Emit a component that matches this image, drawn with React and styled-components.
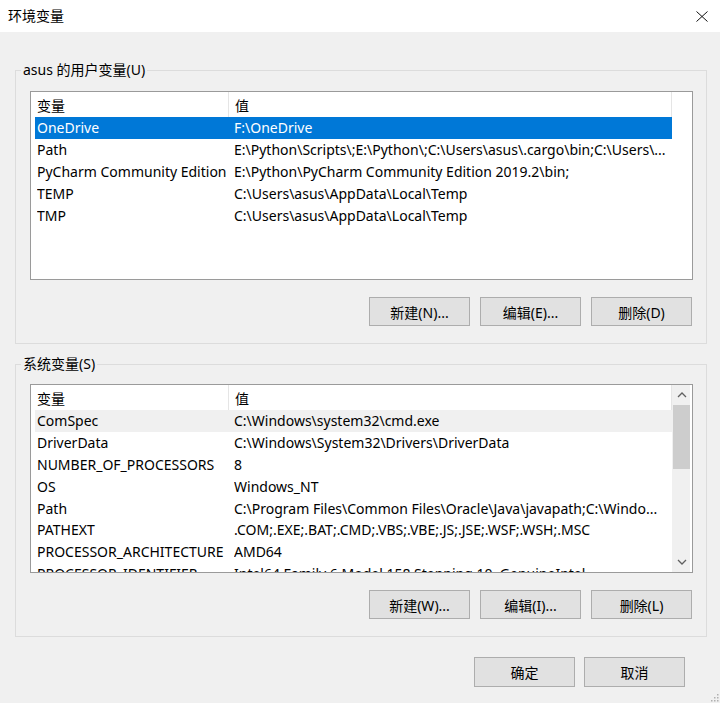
import React from "react";
import styled, { createGlobalStyle } from "styled-components";

const GlobalStyle = createGlobalStyle`
  html, body {
    margin: 0;
    padding: 0;
    background: #f0f0f0;
  }
  * {
    box-sizing: border-box;
  }
`;

const Window = styled.div`
  position: relative;
  width: 720px;
  height: 703px;
  background: #f0f0f0;
  font-family: "Microsoft YaHei UI", "Noto Sans", "Noto Sans CJK SC", sans-serif;
  font-size: 14px;
  color: #000;
  overflow: hidden;
`;

const TitleBar = styled.div`
  height: 32px;
  background: #fff;
  display: flex;
  align-items: center;
  justify-content: space-between;
  padding: 0 12px 0 8px;
`;

const Title = styled.span`
  font-size: 14px;
  line-height: 1;
`;

const CloseButton = styled.div`
  width: 12px;
  height: 11px;
  display: flex;
`;

const Body = styled.div`
  padding: 28px 13px 0 15px;
`;

const Group = styled.fieldset`
  margin: ${({ $first }) => ($first ? "0" : "10px 0 0")};
  padding: ${({ $top }) => $top}px 13px 17px 14px;
  border: 1px solid #dcdcdc;
  min-width: 0;
`;

const Legend = styled.legend`
  margin-left: -9px;
  padding: 0 2px;
  line-height: 20px;
`;

const ListBox = styled.div`
  height: 189px;
  border: 1px solid #9a9a9a;
  background: #fff;
  display: flex;
  overflow: hidden;
`;

const ListContent = styled.div`
  width: 641px;
  display: flex;
  flex-direction: column;
  overflow: hidden;
`;

const Header = styled.div`
  height: 25px;
  flex: none;
  display: grid;
  grid-template-columns: 197px 1fr;
  border-right: 1px solid #e5e5e5;
`;

const HeaderCell = styled.div`
  display: flex;
  align-items: center;
  padding-left: 6px;
  & + & {
    border-left: 1px solid #e5e5e5;
  }
`;

const Row = styled.div`
  flex: none;
  height: 21.8px;
  margin-left: 4px;
  display: grid;
  grid-template-columns: 197px 1fr;
  align-items: center;
  padding-left: 2px;
  white-space: nowrap;
  background: ${({ $state }) =>
    $state === "selected" ? "#0078d7" : $state === "hover" ? "#f0f0f0" : "transparent"};
  color: ${({ $state }) => ($state === "selected" ? "#fff" : "#000")};
`;

const Cell = styled.span`
  overflow: hidden;
  text-overflow: clip;
`;

const ScrollBar = styled.div`
  width: 18px;
  background: #f0f0f0;
  display: flex;
  flex-direction: column;
  align-items: center;
  padding: 0 0 0 1px;
`;

const Arrow = styled.div`
  height: 20px;
  width: 100%;
  display: flex;
  align-items: center;
  justify-content: center;
`;

const Thumb = styled.div`
  width: 100%;
  height: 64px;
  background: #cdcdcd;
`;

const Track = styled.div`
  flex: 1;
`;

const ButtonRow = styled.div`
  display: flex;
  justify-content: flex-end;
  gap: 10px;
  margin-top: 17px;
  padding-right: ${({ $right }) => $right || 0}px;
`;

const Button = styled.button`
  width: 101px;
  height: ${({ $h }) => $h || 29}px;
  background: #e1e1e1;
  border: 1px solid #adadad;
  font: inherit;
  color: #000;
  padding: 0;
  margin: 0;
`;

const Footer = styled(ButtonRow)`
  margin-top: 20px;
  gap: 9px;
  padding-right: 22px;
`;

const Grip = styled.svg`
  position: absolute;
  right: 1px;
  bottom: 1px;
`;

const userVars = [
  ["OneDrive", "F:\\OneDrive", "selected"],
  ["Path", "E:\\Python\\Scripts\\;E:\\Python\\;C:\\Users\\asus\\.cargo\\bin;C:\\Users\\..."],
  ["PyCharm Community Edition", "E:\\Python\\PyCharm Community Edition 2019.2\\bin;"],
  ["TEMP", "C:\\Users\\asus\\AppData\\Local\\Temp"],
  ["TMP", "C:\\Users\\asus\\AppData\\Local\\Temp"],
];

const systemVars = [
  ["ComSpec", "C:\\Windows\\system32\\cmd.exe", "hover"],
  ["DriverData", "C:\\Windows\\System32\\Drivers\\DriverData"],
  ["NUMBER_OF_PROCESSORS", "8"],
  ["OS", "Windows_NT"],
  ["Path", "C:\\Program Files\\Common Files\\Oracle\\Java\\javapath;C:\\Windo..."],
  ["PATHEXT", ".COM;.EXE;.BAT;.CMD;.VBS;.VBE;.JS;.JSE;.WSF;.WSH;.MSC"],
  ["PROCESSOR_ARCHITECTURE", "AMD64"],
  ["PROCESSOR_IDENTIFIER", "Intel64 Family 6 Model 158 Stepping 10, GenuineIntel"],
];

function Chevron({ down }) {
  return (
    <svg width="10" height="6" viewBox="0 0 10 6">
      <path
        d={down ? "M1 1 L5 5 L9 1" : "M1 5 L5 1 L9 5"}
        fill="none"
        stroke="#606060"
        strokeWidth="1.3"
      />
    </svg>
  );
}

function VarList({ rows, scroll }) {
  return (
    <ListBox>
      <ListContent>
        <Header>
          <HeaderCell>变量</HeaderCell>
          <HeaderCell>值</HeaderCell>
        </Header>
        {rows.map(([name, value, state]) => (
          <Row key={name} $state={state}>
            <Cell>{name}</Cell>
            <Cell>{value}</Cell>
          </Row>
        ))}
      </ListContent>
      {scroll && (
        <ScrollBar>
          <Arrow>
            <Chevron />
          </Arrow>
          <Thumb />
          <Track />
          <Arrow>
            <Chevron down />
          </Arrow>
        </ScrollBar>
      )}
    </ListBox>
  );
}

export default function App() {
  return (
    <>
      <GlobalStyle />
      <Window>
        <TitleBar>
          <Title>环境变量</Title>
          <CloseButton>
            <svg width="12" height="11" viewBox="0 0 12 11">
              <path d="M0.5 0.5 L11.5 10.5 M11.5 0.5 L0.5 10.5" stroke="#111" strokeWidth="1" />
            </svg>
          </CloseButton>
        </TitleBar>
        <Body>
          <Group $first $top={11}>
            <Legend>asus 的用户变量(U)</Legend>
            <VarList rows={userVars} />
            <ButtonRow $right={1}>
              <Button>新建(N)...</Button>
              <Button>编辑(E)...</Button>
              <Button>删除(D)</Button>
            </ButtonRow>
          </Group>
          <Group $top={10}>
            <Legend>系统变量(S)</Legend>
            <VarList rows={systemVars} scroll />
            <ButtonRow $right={1}>
              <Button>新建(W)...</Button>
              <Button>编辑(I)...</Button>
              <Button>删除(L)</Button>
            </ButtonRow>
          </Group>
          <Footer>
            <Button $h={30}>确定</Button>
            <Button $h={30}>取消</Button>
          </Footer>
        </Body>
        <Grip width="10" height="10" viewBox="0 0 10 10">
          {[
            [8, 2],
            [8, 5],
            [5, 5],
            [8, 8],
            [5, 8],
            [2, 8],
          ].map(([x, y]) => (
            <rect key={`${x}-${y}`} x={x} y={y} width="1.5" height="1.5" fill="#b0b0b0" />
          ))}
        </Grip>
      </Window>
    </>
  );
}
